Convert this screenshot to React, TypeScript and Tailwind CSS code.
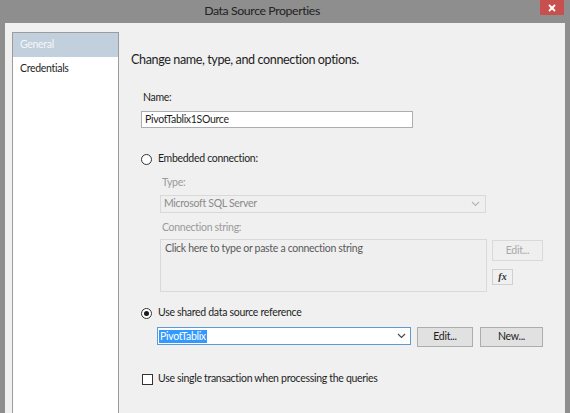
import React from "react";

const font = { fontFamily: 'Lato, "Noto Sans", sans-serif' };

function Radio({ checked }: { checked?: boolean }) {
  return (
    <span className="w-[11px] h-[11px] rounded-full border border-[#333333] bg-white flex items-center justify-center shrink-0">
      {checked && <span className="w-[5px] h-[5px] rounded-full bg-[#1a1a1a]" />}
    </span>
  );
}

function Chevron({ color }: { color: string }) {
  return (
    <svg width="9" height="6" viewBox="0 0 9 6">
      <path d="M1 1 L4.5 4.5 L8 1" fill="none" stroke={color} strokeWidth="1.1" />
    </svg>
  );
}

export default function App() {
  return (
    <div
      className="w-[570px] h-[413px] bg-[#8e8e8e] flex flex-col overflow-hidden text-[10.5px] tracking-[-0.3px] text-[#1e1e1e]"
      style={font}
    >
      {/* Title bar */}
      <div className="relative h-[23px] shrink-0 flex items-center justify-center pr-[46px]">
        <span className="text-[12.3px] tracking-[-0.4px] text-[#222222] leading-none">Data Source Properties</span>
        <div className="absolute right-[6px] top-0 w-[24px] h-[15px] bg-[#c7504f] flex items-center justify-center">
          <svg width="8" height="8" viewBox="0 0 8 8">
            <path d="M1 1 L7 7 M7 1 L1 7" stroke="white" strokeWidth="1.8" />
          </svg>
        </div>
      </div>

      {/* Client area */}
      <div className="flex-1 mx-[5px] bg-[#f0f0f0] flex pl-[7px] pt-[9px] min-h-0">
        {/* Left nav */}
        <div className="w-[107px] shrink-0 bg-white border border-[#9c9c9c] border-b-0 flex flex-col">
          <div className="h-[24px] bg-[#c2cfdc] text-[#f4f7fa] flex items-center pl-[7px]">General</div>
          <div className="h-[24px] flex items-center pl-[7px] text-[#1e1e1e]">Credentials</div>
        </div>

        {/* Main column */}
        <div className="flex-1 pl-[12px] flex flex-col">
          <div className="mt-[20px] h-[16px] leading-[16px] text-[12.6px] tracking-[-0.4px] text-[#1e1e1e]">
            Change name, type, and connection options.
          </div>

          <div className="mt-[22px] ml-[12px] h-[14px] leading-[14px]">Name:</div>
          <div className="mt-[7px] ml-[10px] w-[272px] h-[17px] bg-white border border-[#abadb3] flex items-center pl-[3px] leading-none">
            PivotTablix1SOurce
          </div>

          <div className="mt-[24px] ml-[10px] h-[14px] flex items-center gap-[6px]">
            <Radio />
            <span>Embedded connection:</span>
          </div>

          <div className="mt-[9px] ml-[31px] h-[14px] leading-[14px] text-[#9a9a9a]">Type:</div>
          <div className="mt-[6px] ml-[29px] w-[326px] h-[18px] border border-[#d9d9d9] bg-[#efefef] flex items-center justify-between pl-[3px] pr-[5px] text-[#8a8a8a]">
            <span>Microsoft SQL Server</span>
            <Chevron color="#b5b5b5" />
          </div>

          <div className="mt-[7px] ml-[31px] h-[14px] leading-[14px] text-[#9a9a9a]">Connection string:</div>
          <div className="mt-[5px] ml-[29px] flex gap-[5px]">
            <div className="w-[327px] h-[53px] border border-[#d9d9d9] bg-[#efefef] text-[#5a5a5a] pl-[4px] pt-[1px] leading-[14px]">
              Click here to type or paste a connection string
            </div>
            <div className="flex flex-col">
              <div className="mt-[1px] w-[51px] h-[21px] border border-[#d9d9d9] bg-[#efefef] text-[#a8a8a8] flex items-center justify-center">
                Edit...
              </div>
              <div
                className="mt-[8px] w-[21px] h-[16px] border border-[#d0d0d0] bg-[#f0f0f0] flex items-center justify-center text-[10px] font-bold italic text-[#333333] leading-none tracking-normal"
                style={{ fontFamily: '"Liberation Serif", serif' }}
              >
                fx
              </div>
            </div>
          </div>

          <div className="mt-[14px] ml-[10px] h-[14px] flex items-center gap-[6px]">
            <Radio checked />
            <span>Use shared data source reference</span>
          </div>

          <div className="mt-[7px] ml-[26px] flex items-start">
            <div className="w-[254px] h-[18px] bg-white border border-[#5a9bd8] flex items-center justify-between pl-[1px] pr-[4px]">
              <span className="bg-[#3399ff] text-white px-[1px] h-[13px] leading-[13px]">PivotTablix</span>
              <Chevron color="#444444" />
            </div>
            <div className="ml-[6px] w-[56px] h-[20px] bg-[#e1e1e1] border border-[#adadad] flex items-center justify-center">
              Edit...
            </div>
            <div className="ml-[7px] w-[63px] h-[20px] bg-[#e1e1e1] border border-[#adadad] flex items-center justify-center">
              New...
            </div>
          </div>

          <div className="mt-[25px] ml-[11px] h-[14px] flex items-center gap-[5px]">
            <span className="w-[11px] h-[11px] border border-[#333333] bg-white shrink-0" />
            <span>Use single transaction when processing the queries</span>
          </div>
        </div>
      </div>
    </div>
  );
}
